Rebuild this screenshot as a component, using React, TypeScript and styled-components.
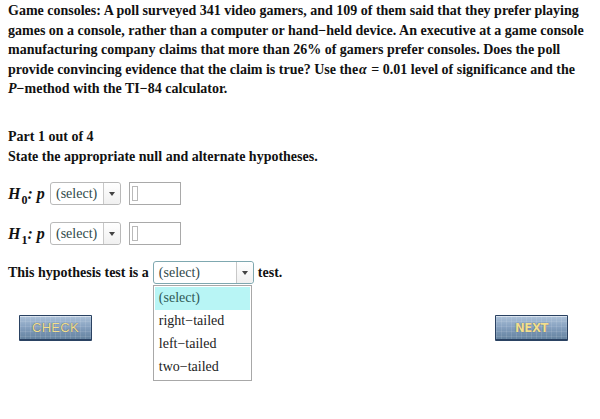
import React from 'react';
import styled, { createGlobalStyle } from 'styled-components';

const GlobalStyle = createGlobalStyle`
  html, body {
    margin: 0;
    padding: 0;
    background: #ffffff;
  }
  body {
    font-family: "Liberation Serif", "Times New Roman", serif;
    color: #111;
  }
`;

const Page = styled.div`
  width: 600px;
  height: 419px;
  padding: 1px 8px 0 8px;
  box-sizing: border-box;
  font-size: 14px;
  font-weight: bold;
  line-height: 19.6px;
`;

const Problem = styled.p`
  margin: 0;
`;

const Alpha = styled.i`
  display: inline-block;
  padding: 0 1px 0 1px;
`;

const PartTitle = styled.div`
  margin-top: 28px;
`;

const HypRow = styled.div<{ top: number }>`
  display: flex;
  align-items: center;
  gap: 8px;
  margin-top: ${p => p.top}px;
  height: 23px;
`;

const HypLabel = styled.span`
  font-style: italic;
  width: 34px;
  white-space: nowrap;
  font-size: 16px;

  sub {
    font-style: normal;
    font-size: 12px;
    vertical-align: -5px;
    line-height: 0;
    margin-left: 1px;
  }
`;

const SelectBox = styled.div<{ w: number; open?: boolean }>`
  position: relative;
  display: flex;
  width: ${p => p.w}px;
  height: 23px;
  box-sizing: border-box;
  border: 1px solid ${p => (p.open ? '#7fa8b0' : '#b9b9b9')};
  border-radius: 3px;
  background: #fff;
  font-weight: normal;
  font-size: 14px;
  color: #2f4a4a;
`;

const SelectText = styled.span`
  flex: 1;
  padding-left: 5px;
  line-height: 21px;
`;

const ArrowPart = styled.span`
  width: 16px;
  border-left: 1px solid #c8c8c8;
  display: flex;
  align-items: center;
  justify-content: center;
  background: linear-gradient(#ffffff, #f0f0f0);
  border-radius: 0 3px 3px 0;

  &::after {
    content: '';
    border-left: 3px solid transparent;
    border-right: 3px solid transparent;
    border-top: 4px solid #444;
    margin-top: 1px;
  }
`;

const AnswerInput = styled.div`
  width: 52px;
  height: 23px;
  box-sizing: border-box;
  border: 1px solid #a9a9a9;
  padding: 3px 2px;

  &::before {
    content: '';
    display: block;
    width: 6px;
    height: 15px;
    box-sizing: border-box;
    border: 1px solid #b9b9b9;
  }
`;

const TestRow = styled.div`
  display: flex;
  align-items: center;
  gap: 4px;
  margin-top: 16px;
  height: 23px;
`;

const Menu = styled.ul`
  position: absolute;
  top: 23px;
  left: -1px;
  width: 99px;
  margin: 0;
  padding: 1px 1px;
  list-style: none;
  background: #fff;
  border: 1px solid #a8a8a8;
  box-sizing: border-box;
  z-index: 2;
`;

const MenuItem = styled.li<{ active?: boolean }>`
  height: 23px;
  line-height: 22px;
  padding-left: 4px;
  color: ${p => (p.active ? '#2f5a55' : '#222')};
  background: ${p => (p.active ? '#b8f5f5' : 'transparent')};
`;

const ButtonRow = styled.div`
  display: flex;
  justify-content: space-between;
  margin-top: 31px;
  padding: 0 24px 0 11px;
`;

const NavButton = styled.button<{ narrow?: boolean }>`
  width: 73px;
  height: 26px;
  border: 1px solid #2a4262;
  border-bottom-width: 2px;
  border-radius: 1px;
  background-color: #7894b4;
  background-image:
    linear-gradient(rgba(255, 255, 255, 0.1) 1px, transparent 1px),
    linear-gradient(90deg, rgba(255, 255, 255, 0.1) 1px, transparent 1px),
    linear-gradient(#adc2d9, #849fbe 50%, #64829f);
  background-size: 5px 5px, 5px 5px, 100% 100%;
  color: #f2de8e;
  font-family: ${p => (p.narrow ? '"DejaVu Sans Condensed", "Liberation Sans Narrow", sans-serif' : '"Liberation Sans", Arial, sans-serif')};
  font-weight: ${p => (p.narrow ? 'bold' : 'normal')};
  font-size: 13px;
  letter-spacing: ${p => (p.narrow ? '-0.4px' : '0.3px')};
  text-shadow: 0 0 1px rgba(40, 55, 80, 0.8);
  padding: 0;
  box-shadow: inset 0 1px 0 rgba(255, 255, 255, 0.5);
`;

export default function App() {
  return (
    <Page>
      <GlobalStyle />
      <Problem>
        Game consoles: A poll surveyed 341 video gamers, and 109 of them said that they prefer playing
        games on a console, rather than a computer or hand−held device. An executive at a game console
        manufacturing company claims that more than 26% of gamers prefer consoles. Does the poll
        provide convincing evidence that the claim is true? Use the<Alpha>α</Alpha> = 0.01 level of significance and the{' '}
        <i>P</i>−method with the TI−84 calculator.
      </Problem>

      <PartTitle>Part 1 out of 4</PartTitle>
      <div>State the appropriate null and alternate hypotheses.</div>

      <HypRow top={16}>
        <HypLabel>
          H<sub>0</sub>: p
        </HypLabel>
        <SelectBox w={71}>
          <SelectText>(select)</SelectText>
          <ArrowPart />
        </SelectBox>
        <AnswerInput />
      </HypRow>

      <HypRow top={17}>
        <HypLabel>
          H<sub>1</sub>: p
        </HypLabel>
        <SelectBox w={71}>
          <SelectText>(select)</SelectText>
          <ArrowPart />
        </SelectBox>
        <AnswerInput />
      </HypRow>

      <TestRow>
        <span>This hypothesis test is a</span>
        <SelectBox w={101} open>
          <SelectText>(select)</SelectText>
          <ArrowPart />
          <Menu>
            <MenuItem active>(select)</MenuItem>
            <MenuItem>right−tailed</MenuItem>
            <MenuItem>left−tailed</MenuItem>
            <MenuItem>two−tailed</MenuItem>
          </Menu>
        </SelectBox>
        <span>test.</span>
      </TestRow>

      <ButtonRow>
        <NavButton>CHECK</NavButton>
        <NavButton narrow>NEXT</NavButton>
      </ButtonRow>
    </Page>
  );
}
